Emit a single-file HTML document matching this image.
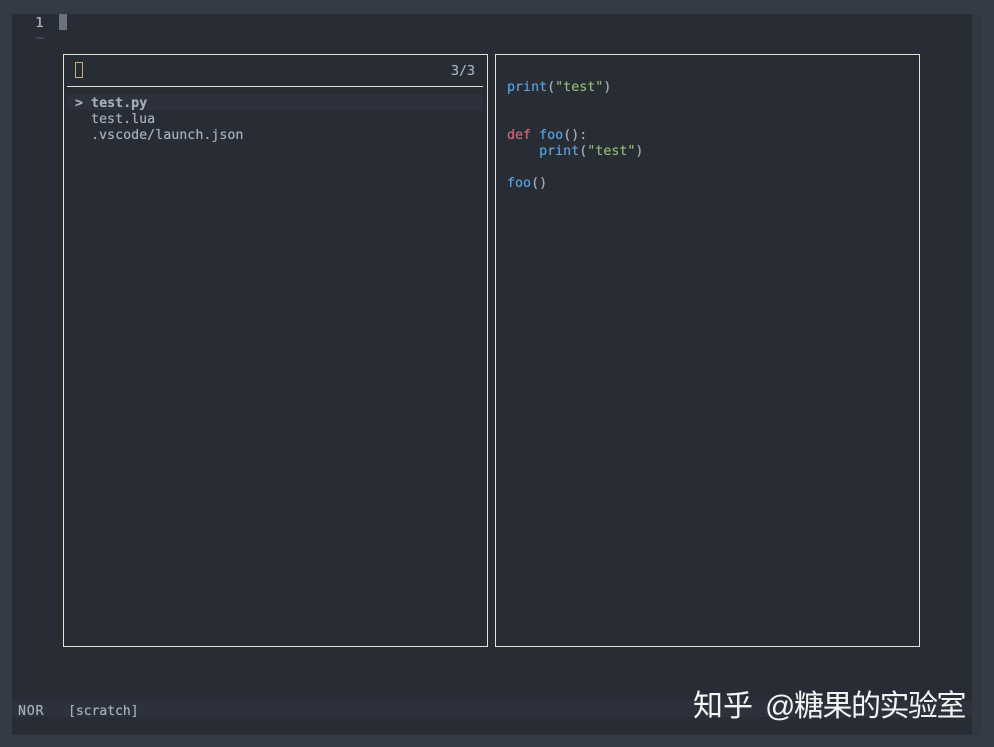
<!DOCTYPE html>
<html><head><meta charset="utf-8">
<style>
html,body{margin:0;padding:0;background:#353b45;width:994px;height:747px;overflow:hidden}
div,span.a{position:absolute}
.t{font:13.33px/16px "DejaVu Sans Mono","Liberation Mono",monospace;white-space:pre;color:#a6adba;text-shadow:0 0 .5px currentColor}
.b{color:#5a9fd8}.g{color:#8fb573}.r{color:#cf6670}
.w{top:690px;font:30px/34px 'Liberation Sans','Noto Sans CJK SC',sans-serif;color:#f4f4f4;white-space:pre}
</style></head><body>
<div style="left:12px;top:14px;width:960px;height:721px;background:#282c34"></div>
<div style="left:972px;top:14px;width:10px;height:721px;background:#323842"></div>
<div style="left:12px;top:701px;width:960px;height:16px;background:#2c313c"></div>
<div class="t" style="left:35px;top:16px;color:#abb2bf;transform-origin:0 50%;transform:scaleX(1.1)">1</div>
<div style="left:59px;top:14px;width:8px;height:16px;background:#6b717d"></div>
<div class="t" style="left:35px;top:31px;color:#4b5263;transform-origin:0 50%;transform:scaleX(1.2)">~</div>

<div style="left:63px;top:54px;width:423px;height:591px;border:1px solid #e6e1cf"></div>
<div style="left:495px;top:54px;width:423px;height:591px;border:1px solid #e6e1cf"></div>
<div style="left:75px;top:62px;width:6px;height:14px;border:1px solid #c9b06f"></div>
<div class="t" style="left:451px;top:64px">3/3</div>
<div style="left:67px;top:86px;width:416px;height:1px;background:#e6e1cf"></div>
<div style="left:67px;top:94px;width:416px;height:16px;background:#2c313c"></div>
<div class="t" style="left:75px;top:96px;font-weight:bold">&gt; test.py</div>
<div class="t" style="left:91px;top:112px">test.lua</div>
<div class="t" style="left:91px;top:128px">.vscode/launch.json</div>

<div class="t" style="left:507px;top:80px"><span class="b">print</span>(<span class="g">"test"</span>)</div>
<div class="t" style="left:507px;top:128px"><span class="r">def</span> <span class="b">foo</span>():</div>
<div class="t" style="left:507px;top:144px">    <span class="b">print</span>(<span class="g">"test"</span>)</div>
<div class="t" style="left:507px;top:176px"><span class="b">foo</span>()</div>

<div class="t" style="left:18px;top:704px;letter-spacing:.7px">NOR</div>
<div class="t" style="left:68px;top:704px;letter-spacing:-.2px">[scratch]</div>
<div class="w" style="left:693px">知乎</div>
<div class="w" style="left:765px;letter-spacing:-1.5px">@糖果的实验室</div>
</body></html>
